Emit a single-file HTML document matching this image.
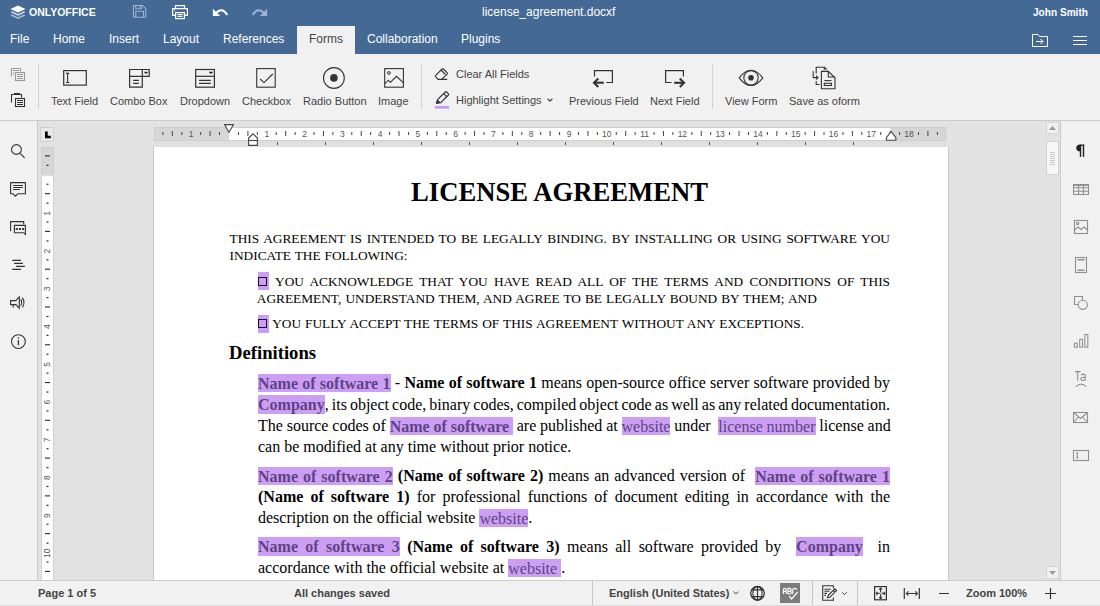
<!DOCTYPE html>
<html><head><meta charset="utf-8"><style>
*{box-sizing:border-box;margin:0;padding:0}
html,body{width:1100px;height:606px;overflow:hidden;background:#e2e2e2;font-family:"Liberation Sans",sans-serif}
.a{position:absolute}
.tab{position:absolute;top:26px;height:28px;line-height:27px;font-size:12px;color:#fff;white-space:nowrap}
.lbl{position:absolute;top:94px;font-size:11px;color:#444;white-space:nowrap;line-height:14px}
.sep{position:absolute;top:64px;width:1px;height:45px;background:#d2d2d2}
.st{position:absolute;top:586px;font-size:11px;font-weight:bold;color:#444;white-space:nowrap;line-height:14px}
.ln{position:absolute;font-family:"Liberation Serif",serif;color:#000;white-space:pre}
.s13{font-size:13.33px;line-height:17px}
.s16{font-size:16px;line-height:21px}
.b{font-weight:bold}
.hl{background:#cc9ff5;color:#5f4384;padding:0.5px 0 1px}
svg{position:absolute;overflow:visible}
</style></head><body>
<div class="a" style="left:0;top:0;width:1100px;height:54px;background:#446995"></div>
<svg style="left:10px;top:5px" width="16" height="14" viewBox="0 0 16 14">
<path d="M8 0.5 L15.5 4 L8 7.5 L0.5 4 Z" fill="#fff"/>
<path d="M2.2 6.3 L0.5 7.2 L8 10.7 L15.5 7.2 L13.8 6.3 L8 9 Z" fill="#fff" opacity="0.75"/>
<path d="M2.2 9.5 L0.5 10.4 L8 13.9 L15.5 10.4 L13.8 9.5 L8 12.2 Z" fill="#fff" opacity="0.55"/>
</svg>
<div class="a" style="left:29px;top:4px;font-size:10.5px;font-weight:bold;color:#fff;line-height:16px">ONLYOFFICE</div>
<svg style="left:128px;top:2px" width="22" height="20" viewBox="128 2 22 20" fill="none" stroke="#9cb3d3" stroke-width="1.1">
<path d="M133.5 5.5 H142.5 L145.8 8.8 V17.3 H133.5 Z"/><path d="M135.8 5.5 V8.8 H141.3 V5.5"/><path d="M135.8 17.3 V11.3 H143.5 V17.3"/><path d="M140 6.2 V8" stroke-width="0.9"/>
</svg>
<svg style="left:170px;top:3px" width="20" height="18" viewBox="170 3 20 18" fill="none" stroke="#fff" stroke-width="1.2">
<path d="M175.5 8.5 V5.6 H184.5 V8.5"/><path d="M175.5 15.4 H172.6 V8.6 H187.4 V15.4 H184.5"/><rect x="175.6" y="12.6" width="8.8" height="6"/><path d="M177.5 14.7 H182.5 M177.5 16.5 H182.5"/><path d="M174 10.2 H175"/>
</svg>
<svg style="left:210px;top:6px" width="20" height="12" viewBox="210 6 20 12">
<path d="M212.9 8.7 V16 H220.2 Z" fill="#fff"/><path d="M215.8 13.3 Q222 6.5 227.3 15" fill="none" stroke="#fff" stroke-width="2.1"/>
</svg>
<svg style="left:250px;top:6px" width="20" height="12" viewBox="250 6 20 12">
<path d="M267.1 8.7 V16 H259.8 Z" fill="#9cb3d3"/><path d="M264.2 13.3 Q258 6.5 252.7 15" fill="none" stroke="#9cb3d3" stroke-width="2.1"/>
</svg>
<div class="a" style="left:482px;top:4px;font-size:12px;color:#fff;line-height:16px">license_agreement.docxf</div>
<div class="a" style="left:1033px;top:5px;font-size:10.1px;font-weight:bold;color:#fff;line-height:16px">John Smith</div>
<div class="tab" style="left:10px">File</div>
<div class="tab" style="left:53px">Home</div>
<div class="tab" style="left:109px">Insert</div>
<div class="tab" style="left:163px">Layout</div>
<div class="tab" style="left:223px">References</div>
<div class="a" style="left:297px;top:26px;width:58px;height:28px;background:#f1f1f1"></div>
<div class="tab" style="left:309px;color:#444">Forms</div>
<div class="tab" style="left:367px">Collaboration</div>
<div class="tab" style="left:461px">Plugins</div>
<svg style="left:1032px;top:34px" width="16" height="13" viewBox="0 0 16 13" fill="none" stroke="#fff" stroke-width="1">
<path d="M0.5 12.5 V0.5 H6 L7.5 2.5 H15.5 V12.5 Z"/><path d="M4 7.5 H11 M8.5 5 L11 7.5 L8.5 10"/>
</svg>
<svg style="left:1073px;top:35px" width="14" height="11" viewBox="0 0 14 11" fill="none" stroke="#fff" stroke-width="1">
<path d="M0 1.5 H14 M0 5.5 H14 M0 9.5 H14"/>
</svg>
<div class="a" style="left:0;top:54px;width:1100px;height:67px;background:#f1f1f1;border-bottom:1px solid #cbcbcb"></div>
<div class="sep" style="left:38px"></div>
<div class="sep" style="left:421px"></div>
<div class="sep" style="left:712px"></div>
<svg style="left:8px;top:64px" width="20" height="20" viewBox="8 64 20 20" fill="none" stroke="#9a9a9a" stroke-width="1.1" ><path d="M11.5 76.5 V68.5 H20.5 V71.5"/><path d="M13 70.5 H19 M13 72.5 H14 M13 74.5 H14" stroke-width="1"/><rect x="15.5" y="72.5" width="9" height="8"/><path d="M17 74.5 H23 M17 76.5 H23 M17 78.5 H23" stroke-width="1"/></svg>
<svg style="left:8px;top:90px" width="20" height="20" viewBox="8 90 20 20" fill="none" stroke="#333" stroke-width="1.1" ><path d="M11.5 102.5 V94.5 H21.5 V97.5"/><rect x="14" y="93" width="6" height="2" fill="#333" stroke="none"/><rect x="15.5" y="98.5" width="9" height="8"/><path d="M17 100.5 H23 M17 102.5 H23 M17 104.5 H23" stroke-width="1"/></svg>
<svg style="left:60px;top:66px" width="30" height="24" viewBox="60 66 30 24" fill="none" stroke="#333" stroke-width="1.2" ><rect x="63.7" y="70.6" width="22.6" height="14.5"/><path d="M67.6 73.3 V82.6 M66 73.4 H69.2 M66 82.5 H69.2" stroke-width="1.1"/></svg>
<svg style="left:125px;top:64px" width="30" height="28" viewBox="125 64 30 28" fill="none" stroke="#333" stroke-width="1.2" ><path d="M129.6 69.5 H149.2 V76.4 H142.3 V87.2 H129.6 Z"/><path d="M129.6 76.4 H142.3 M142.3 69.5 V76.4"/><path d="M133.1 80.4 H138.9 M133.1 83.4 H138.9"/><path d="M144.2 72 H147.9 L146.05 73.9 Z" fill="#333" stroke-width="0.5"/></svg>
<svg style="left:190px;top:64px" width="30" height="28" viewBox="190 64 30 28" fill="none" stroke="#333" stroke-width="1.2" ><rect x="195.7" y="69.5" width="18.7" height="17.7"/><path d="M195.7 76.3 H214.4"/><path d="M199 80.4 H210.8 M199 83.4 H210.8"/><path d="M209 72 H212.9 L210.95 73.9 Z" fill="#333" stroke-width="0.5"/></svg>
<svg style="left:252px;top:64px" width="30" height="28" viewBox="252 64 30 28" fill="none" stroke="#333" stroke-width="1.1" ><rect x="256.7" y="68.6" width="18.5" height="18.6"/><path d="M260.1 79 L264 82.6 L272.8 74"/></svg>
<svg style="left:319px;top:64px" width="30" height="28" viewBox="319 64 30 28" fill="none" stroke="#333" stroke-width="1.1" ><circle cx="333.9" cy="78" r="10.4"/><circle cx="333.9" cy="77.9" r="3.8" fill="#333" stroke="none"/></svg>
<svg style="left:379px;top:64px" width="30" height="28" viewBox="379 64 30 28" fill="none" stroke="#333" stroke-width="1.1" ><rect x="384.7" y="68.6" width="18.7" height="18.6"/><circle cx="388.9" cy="73" r="1.4" stroke-width="1"/><path d="M384.8 83.6 L388.5 80.2 L390.3 82.5 L396.5 76.3 L403.2 82.7"/></svg>
<svg style="left:430px;top:64px" width="25" height="20" viewBox="430 64 25 20" fill="none" stroke="#333" stroke-width="1.1" ><path d="M441.5 79.4 H447.2 M438 79.4 L435.6 76.6 Q435.2 76 435.8 75.4 L442 69 Q442.6 68.4 443.3 69 L447.3 72.9 Q447.8 73.5 447.2 74.1 L441.5 79.4 Z"/><path d="M441 70 L445.5 74.5"/></svg>
<svg style="left:430px;top:88px" width="25" height="24" viewBox="430 88 25 24" fill="none" stroke="#333" stroke-width="1.1" ><path d="M436.8 103 L437.6 99.6 L445.3 92 Q446 91.4 446.6 92 L448.4 93.8 Q449 94.4 448.4 95 L440.7 102.6 Z"/><path d="M443.6 93.7 L447 97"/><path d="M436.6 103.2 L437.4 100.2 L439.8 102.5 Z" fill="#333"/><rect x="435" y="106" width="14" height="2.7" fill="#bf9ff0" stroke="none"/></svg>
<svg style="left:547px;top:98px" width="6" height="5" viewBox="0 0 6 5" fill="none" stroke="#444" stroke-width="1.25"><path d="M0.6 0.8 L3 3.2 L5.4 0.8"/></svg>
<svg style="left:585px;top:64px" width="35" height="28" viewBox="585 64 35 28" fill="none" stroke="#333" stroke-width="1.2" ><path d="M594.5 76.5 V70.6 H612.4 V82.5 H606.2"/><path d="M603.8 82.7 H594" stroke-width="2.1"/><path d="M598.3 78.4 L594 82.7 L598.3 87" stroke-width="2.1"/></svg>
<svg style="left:655px;top:64px" width="35" height="28" viewBox="655 64 35 28" fill="none" stroke="#333" stroke-width="1.2" ><path d="M683.4 76.5 V70.6 H665.6 V82.5 H671.6"/><path d="M674.2 82.8 H684" stroke-width="2.1"/><path d="M679.8 78.4 L684 82.8 L679.8 87" stroke-width="2.1"/></svg>
<svg style="left:733px;top:62px" width="35" height="30" viewBox="733 62 35 30" fill="none" stroke="#333" stroke-width="1.1" ><path d="M739.2 77.8 Q745 70.2 751 70.2 Q757 70.2 762.8 77.8 Q757 85.5 751 85.5 Q745 85.5 739.2 77.8 Z"/><circle cx="751" cy="77.8" r="7.2"/><circle cx="751" cy="77.8" r="2.8" fill="#333" stroke="none"/></svg>
<svg style="left:808px;top:62px" width="35" height="30" viewBox="808 62 35 30" fill="none" stroke="#333" stroke-width="1.1" ><path d="M816.2 73.6 V67.2 H824.3 V70"/><path d="M824.3 67.2 L827 69.6"/><path d="M816.2 81 V84.5 H819.6"/><path d="M813.2 71.2 V77.6 H817.6"/><path d="M816 75.6 L818 77.6 L816 79.6" stroke-width="1.1"/><path d="M821.4 71.4 H828.3 L835 77.8 V88.7 H821.4 Z"/><path d="M828.3 71.4 V77 H835"/><path d="M824.3 80.6 H831.5"/><rect x="824.3" y="83.3" width="7.2" height="2.2"/></svg>
<div class="lbl" style="left:51px;top:94px">Text Field</div>
<div class="lbl" style="left:110px;top:94px">Combo Box</div>
<div class="lbl" style="left:180px;top:94px">Dropdown</div>
<div class="lbl" style="left:242px;top:94px">Checkbox</div>
<div class="lbl" style="left:303px;top:94px">Radio Button</div>
<div class="lbl" style="left:378px;top:94px">Image</div>
<div class="lbl" style="left:456px;top:67px">Clear All Fields</div>
<div class="lbl" style="left:456px;top:93px">Highlight Settings</div>
<div class="lbl" style="left:569px;top:94px">Previous Field</div>
<div class="lbl" style="left:650px;top:94px">Next Field</div>
<div class="lbl" style="left:725px;top:94px">View Form</div>
<div class="lbl" style="left:789px;top:94px">Save as oform</div>
<div class="a" style="left:0;top:121px;width:38px;height:459px;background:#f1f1f1;border-right:1px solid #cbcbcb"></div>
<svg style="left:6px;top:138px" width="24" height="24" viewBox="6 138 24 24" fill="none" stroke="#333" stroke-width="1.1" ><circle cx="16.45" cy="149.5" r="4.9"/><path d="M20.1 153.4 L24.6 157.9"/></svg>
<svg style="left:6px;top:178px" width="24" height="22" viewBox="6 178 24 22" fill="none" stroke="#333" stroke-width="1.1" ><path d="M10.6 182.6 H25.4 V193.8 H17.9 L15.4 196.2 L13 193.8 H10.6 Z"/><path d="M13.1 185.5 H22.9 M13.1 187.5 H22.9 M13.1 189.5 H19.9" stroke-width="1"/></svg>
<svg style="left:6px;top:216px" width="24" height="22" viewBox="6 216 24 22" fill="none" stroke="#333" stroke-width="1.1" ><path d="M10.6 231.2 V221.6 H23.7 V224.6"/><path d="M14.4 225.4 H25.4 V234.4 L23.6 232.7 H14.4 Z"/><path d="M15.7 228.9 H17.7 M18.9 228.9 H20.9 M22.1 228.9 H24.1" stroke-width="2"/></svg>
<svg style="left:6px;top:256px" width="24" height="18" viewBox="6 256 24 18" fill="none" stroke="#333" stroke-width="1.1" ><path d="M12.2 260.4 H20.9 M14.1 263.4 H22.9 M16.1 266.4 H24.8 M12.2 269.4 H20.9" stroke-width="1.1"/></svg>
<svg style="left:6px;top:294px" width="24" height="18" viewBox="6 294 24 18" fill="none" stroke="#333" stroke-width="1.1" ><path d="M10.6 300.6 H15.8 L19.3 296.8 V308.2 L15.8 304.6 H10.6 Z"/><path d="M13.2 304.6 V307.4"/><path d="M20.8 299.2 Q22.6 302.5 20.8 305.8 M22.4 297.6 Q25.6 302.5 22.4 307.4"/></svg>
<svg style="left:6px;top:330px" width="24" height="22" viewBox="6 330 24 22" fill="none" stroke="#333" stroke-width="1.1" ><circle cx="18.4" cy="341.6" r="6.9"/><path d="M18.4 340.1 V345.2" stroke-width="1.3"/><circle cx="18.4" cy="338" r="0.8" fill="#333" stroke="none"/></svg>
<div class="a" style="left:1060px;top:121px;width:40px;height:459px;background:#f1f1f1;border-left:1px solid #cbcbcb"></div>
<svg style="left:1070px;top:140px" width="20" height="20" viewBox="1070 140 20 20">
<path d="M1080.3 144.6 C1077.6 144.6 1076.2 145.9 1076.2 148 C1076.2 150.1 1077.6 151.4 1080.3 151.4 Z" fill="#222"/><rect x="1079.9" y="144.6" width="4.3" height="1.2" fill="#222"/><rect x="1079.8" y="144.6" width="1.4" height="12.3" fill="#222"/><rect x="1082.8" y="144.6" width="1.4" height="12.3" fill="#222"/>
</svg>
<svg style="left:1070px;top:182px" width="22" height="15" viewBox="1070 182 22 15" fill="none" stroke="#8f8f8f" stroke-width="1.05" ><rect x="1073.5" y="184.5" width="15" height="10"/><path d="M1073.5 185.2 H1088.5" stroke-width="1.4"/><path d="M1073.5 187.8 H1088.5 M1073.5 191.2 H1088.5 M1078.6 184.5 V194.5 M1083.4 184.5 V194.5"/></svg>
<svg style="left:1074px;top:220px" width="14" height="14" viewBox="0 0 14 14" fill="none" stroke="#8f8f8f" stroke-width="1.1">
<rect x="0.5" y="0.5" width="13" height="13"/><circle cx="3.7" cy="3.5" r="1.1"/><path d="M0.5 10 L4 7 L7 9.5 L10 7 L13.5 10"/>
</svg>
<svg style="left:1075px;top:257px" width="12" height="16" viewBox="0 0 12 16" fill="none" stroke="#8f8f8f" stroke-width="1.1">
<rect x="0.5" y="0.5" width="11" height="15"/><path d="M2.5 2.8 H9.5 M2.5 13.2 H9.5" stroke-width="1.4"/>
</svg>
<svg style="left:1074px;top:296px" width="14" height="14" viewBox="0 0 14 14" fill="none" stroke="#8f8f8f" stroke-width="1.1">
<path d="M4 8.5 H0.5 V0.5 H8.5 V3.8"/><circle cx="8.8" cy="8.8" r="4.6"/>
</svg>
<svg style="left:1070px;top:330px" width="22" height="20" viewBox="1070 330 22 20" fill="none" stroke="#8f8f8f" stroke-width="1.05" ><rect x="1074.4" y="343.2" width="2.9" height="4"/><rect x="1079.7" y="339.4" width="2.9" height="7.8"/><rect x="1084.9" y="334.5" width="2.9" height="12.7"/></svg>
<svg style="left:1070px;top:366px" width="22" height="24" viewBox="1070 366 22 24" fill="none" stroke="#8f8f8f" stroke-width="1.05" ><path d="M1075 371.6 H1080.4 M1077.7 371.6 V380.8"/><path d="M1081.2 375 Q1083.3 373.3 1085.3 375 V380.8 M1085.3 377.5 Q1080.6 376.9 1080.9 379.3 Q1081.4 381.2 1085.3 380"/><path d="M1075.9 386.6 Q1081.1 381.6 1086.3 386.6"/></svg>
<svg style="left:1073px;top:412px" width="15" height="11" viewBox="0 0 15 11" fill="none" stroke="#8f8f8f" stroke-width="1.1">
<rect x="0.5" y="0.5" width="14" height="10"/><path d="M0.5 0.5 L7.5 6.5 L14.5 0.5 M0.5 10.5 L5.5 5 M14.5 10.5 L9.5 5"/>
</svg>
<svg style="left:1073px;top:450px" width="16" height="11" viewBox="0 0 16 11" fill="none" stroke="#8f8f8f" stroke-width="1.1">
<rect x="0.5" y="0.5" width="15" height="10"/><path d="M3 3 H5.5 M4.25 3 V8 M3 8 H5.5"/>
</svg>
<div class="a" style="left:40px;top:127px;width:14px;height:15px;background:#e8e8e8;border:1px solid #d0d0d0"></div>
<svg style="left:44px;top:130px" width="8" height="10" viewBox="44 130 8 10"><path d="M45 131.4 H47.7 V135.7 H50.8 V138.3 H45 Z" fill="#000"/></svg>
<svg style="left:154px;top:127px" width="792" height="14" viewBox="0 0 792 14"><rect x="0.5" y="0.5" width="791" height="13" fill="#d6d6d6" stroke="#cfcfcf"/><rect x="75.00" y="1" width="661.50" height="12" fill="#fff"/><rect x="8.38" y="5" width="1" height="3" fill="#444"/><rect x="17.83" y="4" width="1" height="5" fill="#444"/><rect x="27.28" y="5" width="1" height="3" fill="#444"/><text x="37.22" y="10" font-size="8.5" fill="#555" text-anchor="middle" font-family="Liberation Sans">1</text><rect x="46.16" y="5" width="1" height="3" fill="#444"/><rect x="55.61" y="4" width="1" height="5" fill="#444"/><rect x="65.06" y="5" width="1" height="3" fill="#444"/><rect x="83.94" y="5" width="1" height="3" fill="#444"/><rect x="93.39" y="4" width="1" height="5" fill="#444"/><rect x="102.83" y="5" width="1" height="3" fill="#444"/><text x="112.78" y="10" font-size="8.5" fill="#555" text-anchor="middle" font-family="Liberation Sans">1</text><rect x="121.73" y="5" width="1" height="3" fill="#444"/><rect x="131.17" y="4" width="1" height="5" fill="#444"/><rect x="140.62" y="5" width="1" height="3" fill="#444"/><text x="150.56" y="10" font-size="8.5" fill="#555" text-anchor="middle" font-family="Liberation Sans">2</text><rect x="159.50" y="5" width="1" height="3" fill="#444"/><rect x="168.95" y="4" width="1" height="5" fill="#444"/><rect x="178.39" y="5" width="1" height="3" fill="#444"/><text x="188.34" y="10" font-size="8.5" fill="#555" text-anchor="middle" font-family="Liberation Sans">3</text><rect x="197.28" y="5" width="1" height="3" fill="#444"/><rect x="206.73" y="4" width="1" height="5" fill="#444"/><rect x="216.18" y="5" width="1" height="3" fill="#444"/><text x="226.12" y="10" font-size="8.5" fill="#555" text-anchor="middle" font-family="Liberation Sans">4</text><rect x="235.06" y="5" width="1" height="3" fill="#444"/><rect x="244.51" y="4" width="1" height="5" fill="#444"/><rect x="253.96" y="5" width="1" height="3" fill="#444"/><text x="263.90" y="10" font-size="8.5" fill="#555" text-anchor="middle" font-family="Liberation Sans">5</text><rect x="272.85" y="5" width="1" height="3" fill="#444"/><rect x="282.29" y="4" width="1" height="5" fill="#444"/><rect x="291.74" y="5" width="1" height="3" fill="#444"/><text x="301.68" y="10" font-size="8.5" fill="#555" text-anchor="middle" font-family="Liberation Sans">6</text><rect x="310.62" y="5" width="1" height="3" fill="#444"/><rect x="320.07" y="4" width="1" height="5" fill="#444"/><rect x="329.51" y="5" width="1" height="3" fill="#444"/><text x="339.46" y="10" font-size="8.5" fill="#555" text-anchor="middle" font-family="Liberation Sans">7</text><rect x="348.41" y="5" width="1" height="3" fill="#444"/><rect x="357.85" y="4" width="1" height="5" fill="#444"/><rect x="367.30" y="5" width="1" height="3" fill="#444"/><text x="377.24" y="10" font-size="8.5" fill="#555" text-anchor="middle" font-family="Liberation Sans">8</text><rect x="386.18" y="5" width="1" height="3" fill="#444"/><rect x="395.63" y="4" width="1" height="5" fill="#444"/><rect x="405.08" y="5" width="1" height="3" fill="#444"/><text x="415.02" y="10" font-size="8.5" fill="#555" text-anchor="middle" font-family="Liberation Sans">9</text><rect x="423.97" y="5" width="1" height="3" fill="#444"/><rect x="433.41" y="4" width="1" height="5" fill="#444"/><rect x="442.86" y="5" width="1" height="3" fill="#444"/><text x="452.80" y="10" font-size="8.5" fill="#555" text-anchor="middle" font-family="Liberation Sans">10</text><rect x="461.75" y="5" width="1" height="3" fill="#444"/><rect x="471.19" y="4" width="1" height="5" fill="#444"/><rect x="480.63" y="5" width="1" height="3" fill="#444"/><text x="490.58" y="10" font-size="8.5" fill="#555" text-anchor="middle" font-family="Liberation Sans">11</text><rect x="499.53" y="5" width="1" height="3" fill="#444"/><rect x="508.97" y="4" width="1" height="5" fill="#444"/><rect x="518.41" y="5" width="1" height="3" fill="#444"/><text x="528.36" y="10" font-size="8.5" fill="#555" text-anchor="middle" font-family="Liberation Sans">12</text><rect x="537.31" y="5" width="1" height="3" fill="#444"/><rect x="546.75" y="4" width="1" height="5" fill="#444"/><rect x="556.19" y="5" width="1" height="3" fill="#444"/><text x="566.14" y="10" font-size="8.5" fill="#555" text-anchor="middle" font-family="Liberation Sans">13</text><rect x="575.09" y="5" width="1" height="3" fill="#444"/><rect x="584.53" y="4" width="1" height="5" fill="#444"/><rect x="593.98" y="5" width="1" height="3" fill="#444"/><text x="603.92" y="10" font-size="8.5" fill="#555" text-anchor="middle" font-family="Liberation Sans">14</text><rect x="612.87" y="5" width="1" height="3" fill="#444"/><rect x="622.31" y="4" width="1" height="5" fill="#444"/><rect x="631.75" y="5" width="1" height="3" fill="#444"/><text x="641.70" y="10" font-size="8.5" fill="#555" text-anchor="middle" font-family="Liberation Sans">15</text><rect x="650.64" y="5" width="1" height="3" fill="#444"/><rect x="660.09" y="4" width="1" height="5" fill="#444"/><rect x="669.53" y="5" width="1" height="3" fill="#444"/><text x="679.48" y="10" font-size="8.5" fill="#555" text-anchor="middle" font-family="Liberation Sans">16</text><rect x="688.43" y="5" width="1" height="3" fill="#444"/><rect x="697.87" y="4" width="1" height="5" fill="#444"/><rect x="707.32" y="5" width="1" height="3" fill="#444"/><text x="717.26" y="10" font-size="8.5" fill="#555" text-anchor="middle" font-family="Liberation Sans">17</text><rect x="726.21" y="5" width="1" height="3" fill="#444"/><rect x="735.65" y="4" width="1" height="5" fill="#444"/><rect x="745.10" y="5" width="1" height="3" fill="#444"/><text x="755.04" y="10" font-size="8.5" fill="#555" text-anchor="middle" font-family="Liberation Sans">18</text><rect x="763.99" y="5" width="1" height="3" fill="#444"/><rect x="773.43" y="4" width="1" height="5" fill="#444"/><rect x="782.88" y="5" width="1" height="3" fill="#444"/></svg>
<div class="a" style="left:154px;top:141px;width:792px;height:6px;background:#dfdfdf"></div>
<div class="a" style="left:277.1px;top:142px;width:1px;height:3px;background:#555"></div>
<div class="a" style="left:325.1px;top:142px;width:1px;height:3px;background:#555"></div>
<div class="a" style="left:373.1px;top:142px;width:1px;height:3px;background:#555"></div>
<div class="a" style="left:421.1px;top:142px;width:1px;height:3px;background:#555"></div>
<div class="a" style="left:469.1px;top:142px;width:1px;height:3px;background:#555"></div>
<div class="a" style="left:517.1px;top:142px;width:1px;height:3px;background:#555"></div>
<div class="a" style="left:565.1px;top:142px;width:1px;height:3px;background:#555"></div>
<div class="a" style="left:613.1px;top:142px;width:1px;height:3px;background:#555"></div>
<div class="a" style="left:661.1px;top:142px;width:1px;height:3px;background:#555"></div>
<div class="a" style="left:709.1px;top:142px;width:1px;height:3px;background:#555"></div>
<div class="a" style="left:757.1px;top:142px;width:1px;height:3px;background:#555"></div>
<div class="a" style="left:805.1px;top:142px;width:1px;height:3px;background:#555"></div>
<div class="a" style="left:853.1px;top:142px;width:1px;height:3px;background:#555"></div>
<svg style="left:224px;top:124px" width="10" height="9" viewBox="0 0 10 9"><path d="M0.6 0.6 H9.4 L5 8.4 Z" fill="#fff" stroke="#444" stroke-width="1.1"/></svg>
<svg style="left:248px;top:133px" width="10" height="13" viewBox="0 0 10 13"><path d="M0.6 12.4 V5 L5 0.8 L9.4 5 V12.4 Z" fill="#fff" stroke="#444" stroke-width="1.1"/><path d="M0.6 7.5 H9.4" stroke="#444" stroke-width="1.1"/></svg>
<svg style="left:884px;top:129px" width="14" height="14" viewBox="884 129 14 14"><path d="M886.4 140.3 V137.6 L891.1 131.5 L895.9 137.6 V140.3 Z" fill="#fff" stroke="#444" stroke-width="1.1"/></svg>
<svg style="left:41px;top:147px" width="13" height="433" viewBox="0 0 13 433"><rect x="0.5" y="0.5" width="12" height="440" fill="#fff" stroke="#d0d0d0"/><rect x="1" y="1" width="11" height="27.70" fill="#d6d6d6"/><rect x="4" y="8.31" width="5" height="1.1" fill="#2a2a2a"/><rect x="5.5" y="17.75" width="2" height="1.2" fill="#2a2a2a"/><rect x="5.5" y="36.64" width="2" height="1.2" fill="#2a2a2a"/><rect x="4" y="46.09" width="5" height="1.1" fill="#2a2a2a"/><rect x="5.5" y="55.53" width="2" height="1.2" fill="#2a2a2a"/><text x="0" y="0" font-size="8.5" fill="#555" text-anchor="middle" font-family="Liberation Sans" transform="translate(9.3 66.28) rotate(-90)">1</text><rect x="5.5" y="74.42" width="2" height="1.2" fill="#2a2a2a"/><rect x="4" y="83.87" width="5" height="1.1" fill="#2a2a2a"/><rect x="5.5" y="93.31" width="2" height="1.2" fill="#2a2a2a"/><text x="0" y="0" font-size="8.5" fill="#555" text-anchor="middle" font-family="Liberation Sans" transform="translate(9.3 104.06) rotate(-90)">2</text><rect x="5.5" y="112.20" width="2" height="1.2" fill="#2a2a2a"/><rect x="4" y="121.65" width="5" height="1.1" fill="#2a2a2a"/><rect x="5.5" y="131.10" width="2" height="1.2" fill="#2a2a2a"/><text x="0" y="0" font-size="8.5" fill="#555" text-anchor="middle" font-family="Liberation Sans" transform="translate(9.3 141.84) rotate(-90)">3</text><rect x="5.5" y="149.99" width="2" height="1.2" fill="#2a2a2a"/><rect x="4" y="159.43" width="5" height="1.1" fill="#2a2a2a"/><rect x="5.5" y="168.88" width="2" height="1.2" fill="#2a2a2a"/><text x="0" y="0" font-size="8.5" fill="#555" text-anchor="middle" font-family="Liberation Sans" transform="translate(9.3 179.62) rotate(-90)">4</text><rect x="5.5" y="187.76" width="2" height="1.2" fill="#2a2a2a"/><rect x="4" y="197.21" width="5" height="1.1" fill="#2a2a2a"/><rect x="5.5" y="206.65" width="2" height="1.2" fill="#2a2a2a"/><text x="0" y="0" font-size="8.5" fill="#555" text-anchor="middle" font-family="Liberation Sans" transform="translate(9.3 217.40) rotate(-90)">5</text><rect x="5.5" y="225.54" width="2" height="1.2" fill="#2a2a2a"/><rect x="4" y="234.99" width="5" height="1.1" fill="#2a2a2a"/><rect x="5.5" y="244.44" width="2" height="1.2" fill="#2a2a2a"/><text x="0" y="0" font-size="8.5" fill="#555" text-anchor="middle" font-family="Liberation Sans" transform="translate(9.3 255.18) rotate(-90)">6</text><rect x="5.5" y="263.32" width="2" height="1.2" fill="#2a2a2a"/><rect x="4" y="272.77" width="5" height="1.1" fill="#2a2a2a"/><rect x="5.5" y="282.22" width="2" height="1.2" fill="#2a2a2a"/><text x="0" y="0" font-size="8.5" fill="#555" text-anchor="middle" font-family="Liberation Sans" transform="translate(9.3 292.96) rotate(-90)">7</text><rect x="5.5" y="301.11" width="2" height="1.2" fill="#2a2a2a"/><rect x="4" y="310.55" width="5" height="1.1" fill="#2a2a2a"/><rect x="5.5" y="320.00" width="2" height="1.2" fill="#2a2a2a"/><text x="0" y="0" font-size="8.5" fill="#555" text-anchor="middle" font-family="Liberation Sans" transform="translate(9.3 330.74) rotate(-90)">8</text><rect x="5.5" y="338.88" width="2" height="1.2" fill="#2a2a2a"/><rect x="4" y="348.33" width="5" height="1.1" fill="#2a2a2a"/><rect x="5.5" y="357.77" width="2" height="1.2" fill="#2a2a2a"/><text x="0" y="0" font-size="8.5" fill="#555" text-anchor="middle" font-family="Liberation Sans" transform="translate(9.3 368.52) rotate(-90)">9</text><rect x="5.5" y="376.66" width="2" height="1.2" fill="#2a2a2a"/><rect x="4" y="386.11" width="5" height="1.1" fill="#2a2a2a"/><rect x="5.5" y="395.56" width="2" height="1.2" fill="#2a2a2a"/><text x="0" y="0" font-size="8.5" fill="#555" text-anchor="middle" font-family="Liberation Sans" transform="translate(9.3 406.30) rotate(-90)">10</text><rect x="5.5" y="414.44" width="2" height="1.2" fill="#2a2a2a"/><rect x="4" y="423.89" width="5" height="1.1" fill="#2a2a2a"/></svg>
<div class="a" style="left:1046px;top:122px;width:13px;height:12px;background:#f1f1f1;border:1px solid #d6d6d6"></div>
<svg style="left:1049px;top:126px" width="7" height="4" viewBox="0 0 7 4"><path d="M0 4 L3.5 0 L7 4 Z" fill="#999"/></svg>
<div class="a" style="left:1046px;top:141px;width:13px;height:34px;background:#f6f6f6;border:1px solid #d2d2d2"></div>
<div class="a" style="left:1050px;top:152px;width:5px;height:1px;background:#cacaca"></div>
<div class="a" style="left:1050px;top:154px;width:5px;height:1px;background:#cacaca"></div>
<div class="a" style="left:1050px;top:156px;width:5px;height:1px;background:#cacaca"></div>
<div class="a" style="left:1050px;top:158px;width:5px;height:1px;background:#cacaca"></div>
<div class="a" style="left:1050px;top:160px;width:5px;height:1px;background:#cacaca"></div>
<div class="a" style="left:1050px;top:162px;width:5px;height:1px;background:#cacaca"></div>
<div class="a" style="left:1050px;top:164px;width:5px;height:1px;background:#cacaca"></div>
<div class="a" style="left:1046px;top:566px;width:13px;height:13px;background:#f1f1f1;border:1px solid #d6d6d6"></div>
<svg style="left:1049px;top:571px" width="7" height="4" viewBox="0 0 7 4"><path d="M0 0 L3.5 4 L7 0 Z" fill="#999"/></svg>
<div class="a" style="left:153px;top:147px;width:796px;height:440px;background:#fff;border-left:1px solid #c8c8c8;border-right:1px solid #c8c8c8"></div>
<div class="ln " style="left:411px;top:175px;font-size:26.67px;font-weight:bold;line-height:34px">LICENSE AGREEMENT</div>
<div class="ln s13" style="left:229.5px;top:230px;word-spacing:1.498px">THIS AGREEMENT IS INTENDED TO BE LEGALLY BINDING. BY INSTALLING OR USING SOFTWARE YOU</div>
<div class="ln s13" style="left:229.5px;top:247px;word-spacing:0.65px">INDICATE THE FOLLOWING:</div>
<div class="ln s13" style="left:275.0px;top:273px;word-spacing:2.983px">YOU ACKNOWLEDGE THAT YOU HAVE READ ALL OF THE TERMS AND CONDITIONS OF THIS</div>
<div class="ln s13" style="left:256.8px;top:290px;word-spacing:0.74px">AGREEMENT, UNDERSTAND THEM, AND AGREE TO BE LEGALLY BOUND BY THEM; AND</div>
<div class="ln s13" style="left:272.2px;top:314.5px;word-spacing:0.68px">YOU FULLY ACCEPT THE TERMS OF THIS AGREEMENT WITHOUT ANY EXCEPTIONS.</div>
<div class="ln " style="left:229px;top:340.7px;font-size:18.67px;font-weight:bold;line-height:24px">Definitions</div>
<div class="ln s16" style="left:258px;top:372px;word-spacing:0.28px"><span class="hl b">Name of software 1</span> - <b>Name of software 1</b> means open-source office server software provided by</div>
<div class="ln s16" style="left:258px;top:393.5px;word-spacing:-0.94px"><span class="hl b">Company</span>, its object code, binary codes, compiled object code as well as any related documentation.</div>
<div class="ln s16" style="left:258px;top:415.2px;word-spacing:-0.165px">The source codes of <span class="hl b">Name of software </span> are published at <span class="hl">website</span> under  <span class="hl">license number</span> license and</div>
<div class="ln s16" style="left:258px;top:436px">can be modified at any time without prior notice.</div>
<div class="ln s16" style="left:258px;top:465px;word-spacing:1.03px"><span class="hl b">Name of software 2</span> <b>(Name of software 2)</b> means an advanced version of  <span class="hl b">Name of software 1</span></div>
<div class="ln s16" style="left:258px;top:485.7px;word-spacing:3.079px"><b>(Name of software 1)</b> for professional functions of document editing in accordance with the</div>
<div class="ln s16" style="left:258px;top:507px">description on the official website <span class="hl">website</span>.</div>
<div class="ln s16" style="left:258px;top:535.6px;word-spacing:3.377px"><span class="hl b">Name of software 3</span> <b>(Name of software 3)</b> means all software provided by  <span class="hl b">Company</span>  in</div>
<div class="ln s16" style="left:258px;top:557px">accordance with the official website at <span class="hl">website </span>.</div>
<div class="a" style="left:258px;top:272px;width:11px;height:18px;background:#cc9ff5"></div>
<div class="a" style="left:258px;top:277px;width:9px;height:9px;border:1.2px solid #150a20"></div>
<div class="a" style="left:258px;top:315px;width:11px;height:18px;background:#cc9ff5"></div>
<div class="a" style="left:258px;top:319px;width:9px;height:9px;border:1.2px solid #150a20"></div>
<div class="a" style="left:0;top:580px;width:1100px;height:26px;background:#f1f1f1;border-top:1px solid #cbcbcb"></div>
<div class="st" style="left:38px">Page 1 of 5</div>
<div class="st" style="left:294px">All changes saved</div>
<div class="st" style="left:609px">English (United States)</div>
<div class="st" style="left:966px">Zoom 100%</div>
<svg style="left:733px;top:591px" width="6" height="4" viewBox="0 0 6 4" fill="none" stroke="#444" stroke-width="1"><path d="M0.5 0.5 L3 3 L5.5 0.5"/></svg>
<div class="a" style="left:592px;top:581px;width:1px;height:24px;background:#c6c6c6"></div>
<div class="a" style="left:812px;top:581px;width:1px;height:24px;background:#c6c6c6"></div>
<div class="a" style="left:857px;top:581px;width:1px;height:24px;background:#c6c6c6"></div>
<div class="a" style="left:0;top:605px;width:1100px;height:1px;background:#dedede"></div>
<svg style="left:746px;top:582px" width="24" height="22" viewBox="746 582 24 22" fill="none" stroke="#333" stroke-width="1.1" ><circle cx="757.5" cy="593.3" r="6.8" stroke-width="1.3"/><ellipse cx="757.5" cy="593.3" rx="4.6" ry="6.8"/><path d="M757.5 586.5 V600.1 M751 589.9 H764 M751 596.6 H764"/></svg>
<div class="a" style="left:780px;top:583px;width:20px;height:20px;background:#7b7b7b"></div>
<svg style="left:778px;top:582px" width="62" height="22" viewBox="778 582 62 22" fill="none" stroke="#fff" stroke-width="1.15" ><path d="M783.4 594 V589.6 Q783.4 588.4 784.8 588.4 Q786.2 588.4 786.2 589.6 V594 M783.4 591.4 H786.2"/><path d="M788 594 V588.4 H789.9 Q791.1 588.4 791.1 589.7 Q791.1 591.1 789.9 591.1 H788 M789.9 591.1 Q791.3 591.1 791.3 592.5 Q791.3 594 789.9 594 H788"/><path d="M796.6 589.9 Q796.5 588.4 794.8 588.4 Q792.8 588.4 792.8 590.2 V594"/><path d="M789.3 596.3 L791.6 598.9 L797.8 591.9" stroke-width="1.35"/></svg>
<svg style="left:818px;top:582px" width="22" height="22" viewBox="818 582 22 22" fill="none" stroke="#333" stroke-width="1.1" ><path d="M833.4 588.2 V585.7 H822.7 V600.2 H833.4 V597.4"/><path d="M824.4 589.3 H830.7 M824.4 591.3 H829.5 M824.4 593.4 H827 M824.4 595.4 H825.9"/><path d="M827.6 597.7 L828.3 595.3 L834.8 588.8 L836.6 590.6 L830 597.1 Z M833.2 590.4 L835 592.2"/></svg>
<svg style="left:838px;top:588px" width="12" height="10" viewBox="838 588 12 10" fill="none" stroke="#444" stroke-width="1" ><path d="M842.2 592.3 L844.5 594.6 L846.8 592.3"/></svg>
<svg style="left:870px;top:582px" width="60" height="22" viewBox="870 582 60 22" fill="none" stroke="#333" stroke-width="1.05" ><rect x="874.6" y="586.6" width="11.8" height="13.2" stroke-width="1.2"/><path d="M880.6 588.2 V592.5 M880.6 594.1 V598.6 M876.2 593.3 H879.8 M881.4 593.3 H885"/><path d="M879.1 589.6 L880.6 588.1 L882.1 589.6 M879.1 597.2 L880.6 598.7 L882.1 597.2 M877.6 591.8 L876.1 593.3 L877.6 594.8 M883.6 591.8 L885.1 593.3 L883.6 594.8"/><path d="M904.3 588 V599 M919.3 588 V599" stroke-width="1.2"/><path d="M906.4 593.5 H917.4 M908.5 591.3 L906.3 593.5 L908.5 595.7 M915.3 591.3 L917.5 593.5 L915.3 595.7"/></svg>
<div class="a" style="left:939px;top:593px;width:10px;height:1.2px;background:#333"></div>
<svg style="left:1045px;top:588px" width="11" height="11" viewBox="0 0 11 11" fill="none" stroke="#333" stroke-width="1.2"><path d="M5.5 0 V11 M0 5.5 H11"/></svg>
</body></html>
